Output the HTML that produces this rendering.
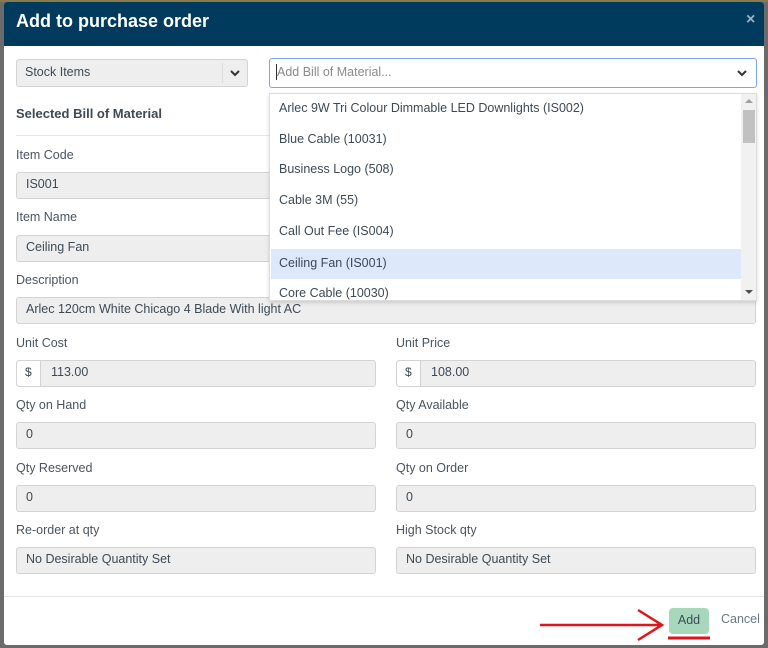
<!DOCTYPE html>
<html><head><style>
*{box-sizing:border-box;margin:0;padding:0}
body{width:768px;height:648px;background:#6b6b6b;position:relative;overflow:hidden;font-family:"Liberation Sans","DejaVu Sans",sans-serif;color:#3d4a55}
.a{position:absolute}
.lbl{position:absolute;font-size:12.5px;color:#4a5560}
.inp{position:absolute;height:27px;background:#eeeeee;border:1px solid #d3d3d3;border-radius:3px;font-size:12.5px;color:#3d4a55;padding:4px 9px;white-space:nowrap}
.item{position:absolute;left:1px;width:470px;height:30px;font-size:12.5px;color:#3d4a55;padding:7px 8px}
</style></head><body>
<div class="a" style="left:0;top:0;width:768px;height:2px;background:#8a7a4a"></div>
<div class="a" style="left:4px;top:2px;width:760px;height:643px;background:#fff;border-radius:3px;overflow:hidden">
  <div class="a" style="left:0;top:0;width:760px;height:44px;background:#003a5d"></div>
  <div class="a" style="left:12px;top:9px;font-size:18px;font-weight:bold;color:#fff">Add to purchase order</div>
  <div class="a" style="left:742px;top:9px;font-size:16px;font-weight:bold;color:#9fb3c4">×</div>
</div>
<div class="inp" style="left:16px;top:59px;width:232px;height:28px;padding:5px 8px">Stock Items</div>
<div class="a" style="left:222px;top:63px;width:1px;height:20px;background:#ddd"></div>
<svg class="a" style="left:230px;top:70px" width="10" height="7"><path d="M1 1 L5 5 L9 1" stroke="#333" stroke-width="2" fill="none"/></svg>
<div class="a" style="left:269px;top:58px;width:488px;height:30px;border:1px solid #7aa7e8;border-radius:3px;background:#fff;font-size:12.5px;color:#8a8a8a;padding:6px 7px">Add Bill of Material...</div>
<div class="a" style="left:276px;top:64px;width:1px;height:16px;background:#333"></div>
<svg class="a" style="left:737px;top:70px" width="10" height="7"><path d="M1 1 L5 5 L9 1" stroke="#333" stroke-width="2" fill="none"/></svg>
<div class="a" style="left:16px;top:106px;font-size:13px;font-weight:bold;color:#3d4a55">Selected Bill of Material</div>
<div class="a" style="left:16px;top:135px;width:740px;height:1px;background:#e6e6e6"></div>

<div class="lbl" style="left:16px;top:148px">Item Code</div>
<div class="inp" style="left:16px;top:172px;width:740px">IS001</div>
<div class="lbl" style="left:16px;top:210px">Item Name</div>
<div class="inp" style="left:16px;top:235px;width:740px">Ceiling Fan</div>
<div class="lbl" style="left:16px;top:273px">Description</div>
<div class="inp" style="left:16px;top:297px;width:740px">Arlec 120cm White Chicago 4 Blade With light AC</div>

<div class="lbl" style="left:16px;top:336px">Unit Cost</div>
<div class="inp" style="left:16px;top:360px;width:360px;padding-left:34px">113.00</div>
<div class="a" style="left:17px;top:361px;width:24px;height:25px;background:#fff;border-right:1px solid #d3d3d3;font-size:12px;padding:4px 8px;border-radius:3px 0 0 3px">$</div>
<div class="lbl" style="left:396px;top:336px">Unit Price</div>
<div class="inp" style="left:396px;top:360px;width:360px;padding-left:34px">108.00</div>
<div class="a" style="left:397px;top:361px;width:24px;height:25px;background:#fff;border-right:1px solid #d3d3d3;font-size:12px;padding:4px 8px;border-radius:3px 0 0 3px">$</div>

<div class="lbl" style="left:16px;top:398px">Qty on Hand</div>
<div class="inp" style="left:16px;top:422px;width:360px">0</div>
<div class="lbl" style="left:396px;top:398px">Qty Available</div>
<div class="inp" style="left:396px;top:422px;width:360px">0</div>
<div class="lbl" style="left:16px;top:461px">Qty Reserved</div>
<div class="inp" style="left:16px;top:485px;width:360px">0</div>
<div class="lbl" style="left:396px;top:461px">Qty on Order</div>
<div class="inp" style="left:396px;top:485px;width:360px">0</div>
<div class="lbl" style="left:16px;top:523px">Re-order at qty</div>
<div class="inp" style="left:16px;top:547px;width:360px">No Desirable Quantity Set</div>
<div class="lbl" style="left:396px;top:523px">High Stock qty</div>
<div class="inp" style="left:396px;top:547px;width:360px">No Desirable Quantity Set</div>

<div class="a" style="left:4px;top:596px;width:760px;height:1px;background:#e6e6e6"></div>

<div class="a" style="left:269px;top:93px;width:488px;height:208px;background:#fff;border:1px solid #ddd;box-shadow:0 2px 4px rgba(0,0,0,.15);overflow:hidden">
  <div class="item" style="top:0">Arlec 9W Tri Colour Dimmable LED Downlights (IS002)</div>
  <div class="item" style="top:31px">Blue Cable (10031)</div>
  <div class="item" style="top:61px">Business Logo (508)</div>
  <div class="item" style="top:92px">Cable 3M (55)</div>
  <div class="item" style="top:123px">Call Out Fee (IS004)</div>
  <div class="item" style="top:155px;background:#dde8fb">Ceiling Fan (IS001)</div>
  <div class="item" style="top:185px">Core Cable (10030)</div>
  <div class="a" style="left:471px;top:0;width:16px;height:206px;background:#f1f1f1"></div>
  <div class="a" style="left:473px;top:16px;width:12px;height:33px;background:#c1c1c1"></div>
  <div class="a" style="left:475px;top:5px;width:0;height:0;border-left:4px solid transparent;border-right:4px solid transparent;border-bottom:4px solid #a0a0a0"></div>
  <div class="a" style="left:475px;top:196px;width:0;height:0;border-left:4px solid transparent;border-right:4px solid transparent;border-top:4px solid #505050"></div>
</div>

<div class="a" style="left:669px;top:608px;width:40px;height:26px;background:#a8d8bc;border-radius:4px;font-size:12.5px;color:#3d4a55;text-align:center;padding-top:5px">Add</div>
<div class="a" style="left:721px;top:612px;font-size:12.5px;color:#6b7885">Cancel</div>
<svg class="a" style="left:530px;top:605px" width="190" height="40"><path d="M10 20 L130 20 M108 5 L132 20 L108 35" stroke="#e0161b" stroke-width="2.5" fill="none"/><path d="M138 33 L180 33" stroke="#e0161b" stroke-width="3"/></svg>
</body></html>
